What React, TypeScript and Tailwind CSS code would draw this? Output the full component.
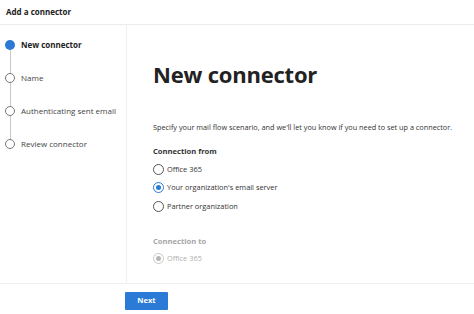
import React from "react";

function Radio({ checked, disabled }: { checked?: boolean; disabled?: boolean }) {
  return (
    <span
      className={`flex h-[11px] w-[11px] items-center justify-center rounded-full border ${
        disabled ? "border-[#c8c8c8]" : checked ? "border-[#2b7bd6]" : "border-[#555]"
      }`}
    >
      {checked && (
        <span className={`h-[5px] w-[5px] rounded-full ${disabled ? "bg-[#b5b5b5]" : "bg-[#2b7bd6]"}`} />
      )}
    </span>
  );
}

function Step({ label, active, last }: { label: string; active?: boolean; last?: boolean }) {
  return (
    <div className="flex h-[33px] items-start">
      <div className="flex w-[20px] flex-col items-center self-stretch">
        <span
          className={`h-[10px] w-[10px] shrink-0 rounded-full ${
            active ? "bg-[#2b7bd6]" : "border border-[#777] bg-white"
          }`}
        />
        {!last && <span className="w-px flex-1 bg-[#c8c8c8]" />}
      </div>
      <span
        className={`-mt-[1px] ml-[1px] text-[8px] leading-[12px] ${
          active ? "font-bold text-[#222]" : "text-[#444]"
        }`}
      >
        {label}
      </span>
    </div>
  );
}

export default function App() {
  return (
    <div
      className="flex h-[314px] w-[474px] flex-col bg-white text-[#333]"
      style={{ fontFamily: '"Open Sans", "Noto Sans", sans-serif' }}
    >
      <div className="flex h-[25px] shrink-0 items-center border-b border-[#ececec] pl-[6px]">
        <span className="text-[8px] font-bold text-[#222]">Add a connector</span>
      </div>
      <div className="flex h-[259px] shrink-0 border-b border-[#efefef]">
        <div className="w-[127px] shrink-0 border-r border-[#efefef] pt-[15px]">
          <Step label="New connector" active />
          <Step label="Name" />
          <Step label="Authenticating sent email" />
          <Step label="Review connector" last />
        </div>
        <div className="flex flex-col pl-[26px] pt-[34px]">
          <h1 className="h-[30px] text-[22px] font-bold leading-[30px] tracking-[-0.2px] text-[#222]">
            New connector
          </h1>
          <p className="mt-[32px] h-[12px] text-[7.3px] leading-[12px] text-[#333]">
            Specify your mail flow scenario, and we'll let you know if you need to set up a connector.
          </p>
          <div className="mt-[12px] h-[12px] text-[7.6px] font-bold leading-[12px] text-[#333]">
            Connection from
          </div>
          <div className="mt-[3px] flex flex-col">
            <label className="flex h-[18.5px] items-center gap-[3px]">
              <Radio />
              <span className="text-[7.4px] text-[#333]">Office 365</span>
            </label>
            <label className="flex h-[18.5px] items-center gap-[3px]">
              <Radio checked />
              <span className="text-[7.4px] text-[#333]">Your organization's email server</span>
            </label>
            <label className="flex h-[18.5px] items-center gap-[3px]">
              <Radio />
              <span className="text-[7.4px] text-[#333]">Partner organization</span>
            </label>
          </div>
          <div className="mt-[19px] h-[12px] text-[7.6px] font-bold leading-[12px] text-[#a6a6a6]">
            Connection to
          </div>
          <label className="mt-[3px] flex h-[18px] items-center gap-[3px]">
            <Radio checked disabled />
            <span className="text-[7.4px] text-[#b0b0b0]">Office 365</span>
          </label>
        </div>
      </div>
      <div className="flex flex-1 items-start pl-[125px] pt-[8px]">
        <button className="flex h-[18px] w-[43px] items-center justify-center rounded-[1px] bg-[#2b7bd6] text-[7.6px] font-bold text-white">
          Next
        </button>
      </div>
    </div>
  );
}
